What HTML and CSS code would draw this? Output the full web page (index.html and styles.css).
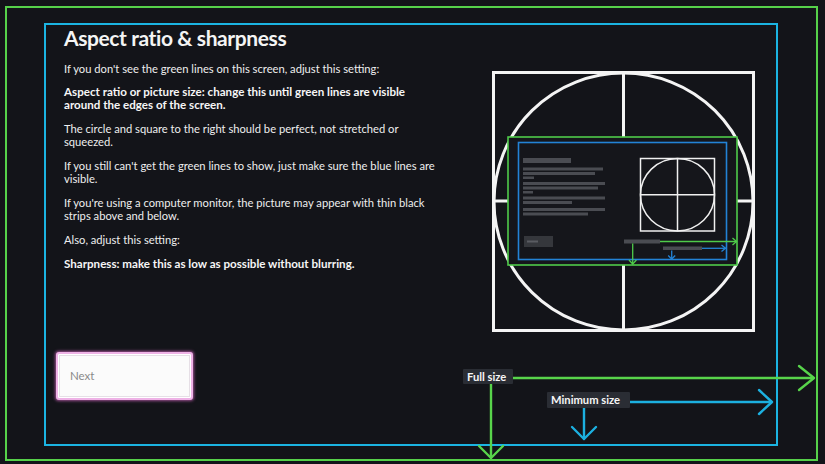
FILE: index.html
```html
<!DOCTYPE html>
<html lang="en">
<head>
<meta charset="utf-8">
<title>Aspect ratio &amp; sharpness</title>
<link rel="stylesheet" href="styles.css">
</head>
<body>
<div class="screen">
  <div class="frame-green">
    <div class="frame-blue">
      <div class="text-col">
        <h1 class="title">Aspect ratio &amp; sharpness</h1>
        <p class="para first">If you don't see the green lines on this screen, adjust this setting:</p>
        <p class="para strong">Aspect ratio or picture size: change this until green lines are visible around the edges of the screen.</p>
        <p class="para">The circle and square to the right should be perfect, not stretched or squeezed.</p>
        <p class="para">If you still can't get the green lines to show, just make sure the blue lines are visible.</p>
        <p class="para">If you're using a computer monitor, the picture may appear with thin black strips above and below.</p>
        <p class="para">Also, adjust this setting:</p>
        <p class="para strong">Sharpness: make this as low as possible without blurring.</p>
        <div class="next-btn">Next</div>
      </div>
      <svg class="pattern" viewBox="490 69 268 266" width="268" height="266">
        <rect x="493.5" y="72.5" width="260" height="258" fill="none" stroke="#f4f4f4" stroke-width="3"/>
        <ellipse cx="623.5" cy="201.5" rx="129.5" ry="128.5" fill="none" stroke="#f4f4f4" stroke-width="3"/>
        <line x1="623.5" y1="72" x2="623.5" y2="331" stroke="#f4f4f4" stroke-width="3"/>
        <line x1="493" y1="201" x2="754" y2="201" stroke="#f4f4f4" stroke-width="3"/>
        <rect x="508" y="137" width="229" height="128" fill="#15161b" stroke="#4fcb4a" stroke-width="1.6"/>
        <rect x="518.5" y="142.5" width="208" height="117" fill="none" stroke="#2383d6" stroke-width="1.6"/>
        <g fill="#4a4c52">
          <rect x="523" y="158" width="48" height="5"/>
          <rect x="523" y="167.5" width="80" height="3"/>
          <rect x="523" y="172" width="72" height="3"/>
          <rect x="523" y="176.5" width="11" height="2.5"/>
          <rect x="523" y="182" width="82" height="3"/>
          <rect x="523" y="186.5" width="75" height="3"/>
          <rect x="523" y="191" width="10" height="2.5"/>
          <rect x="523" y="196.5" width="82" height="3"/>
          <rect x="523" y="201" width="49" height="3"/>
          <rect x="523" y="208" width="82" height="3"/>
          <rect x="523" y="212.5" width="65" height="3"/>
          <rect x="524" y="236" width="29" height="11" fill="#35373c"/>
          <rect x="527" y="240.5" width="11" height="2" fill="#5a5c62"/>
          <rect x="624" y="239.5" width="36" height="4"/>
          <rect x="663" y="246.5" width="39" height="3.5"/>
        </g>
        <g fill="none" stroke="#f0f0f0" stroke-width="1.5">
          <rect x="640.5" y="158.5" width="74" height="72.5"/>
          <ellipse cx="677.5" cy="194.7" rx="37" ry="36.2"/>
          <line x1="677.5" y1="158.5" x2="677.5" y2="231"/>
          <line x1="640.5" y1="194.7" x2="714.5" y2="194.7"/>
        </g>
        <g fill="none" stroke="#4fcb4a" stroke-width="1.3">
          <line x1="660" y1="241.5" x2="736.5" y2="241.5"/>
          <polyline points="732.5,238 736.5,241.5 732.5,245"/>
          <line x1="632.7" y1="243.5" x2="632.7" y2="264"/>
          <polyline points="629,260 632.7,264 636.4,260"/>
        </g>
        <g fill="none" stroke="#2383d6" stroke-width="1.3">
          <line x1="702" y1="248.3" x2="725.5" y2="248.3"/>
          <polyline points="721.5,245 725.5,248.3 721.5,251.6"/>
          <line x1="671.7" y1="250.5" x2="671.7" y2="259"/>
          <polyline points="668.2,255.5 671.7,259 675.2,255.5"/>
        </g>
      </svg>
    </div>
  </div>
  <svg class="guides" viewBox="0 0 825 464" width="825" height="464">
    <g fill="none" stroke="#58d44b" stroke-width="2.4" stroke-linecap="round" stroke-linejoin="round">
      <line x1="513" y1="378" x2="813" y2="378"/>
      <polyline points="799,366 814,378 799,390"/>
      <line x1="491" y1="384" x2="491" y2="458"/>
      <polyline points="479,446 491,458 503,446"/>
    </g>
    <g fill="none" stroke="#1cb0e0" stroke-width="2.4" stroke-linecap="round" stroke-linejoin="round">
      <line x1="630" y1="402" x2="771" y2="402"/>
      <polyline points="759,390 772,402 759,414"/>
      <line x1="584" y1="408" x2="584" y2="439"/>
      <polyline points="572,427 584,439 596,427"/>
    </g>
  </svg>
  <div class="tag tag-full">Full size</div>
  <div class="tag tag-min">Minimum size</div>
</div>
</body>
</html>
```

FILE: styles.css
```css
html, body {
  margin: 0;
  padding: 0;
  background: #121318;
}

.screen {
  position: relative;
  width: 825px;
  height: 464px;
  box-sizing: border-box;
  padding: 6px 0 0 5px;
  background: #131419;
  overflow: hidden;
  font-family: Lato, "Open Sans", sans-serif;
  color: #f2f2f2;
}

.frame-green {
  width: 813px;
  height: 455px;
  box-sizing: border-box;
  border: 2px solid #56d14a;
  padding: 15px 0 0 37px;
}

.frame-blue {
  width: 734px;
  height: 423px;
  box-sizing: border-box;
  border: 2px solid #1bb4e2;
  padding: 0 0 0 18px;
  display: flex;
  align-items: flex-start;
}

.text-col {
  flex: 0 0 375px;
  width: 375px;
  padding-top: 2px;
  margin-right: 51px;
  display: flex;
  flex-direction: column;
  align-items: flex-start;
}

.title {
  margin: 0 0 13px;
  font-size: 21px;
  line-height: 22px;
  font-weight: 700;
  letter-spacing: -0.4px;
  color: #f4f4f4;
  white-space: nowrap;
}

.para {
  margin: 0 0 11px;
  font-size: 11.2px;
  line-height: 13px;
  color: #eeeeee;
}

.para.first {
  margin-bottom: 10px;
}

.para.strong {
  font-size: 11.6px;
  font-weight: 700;
  color: #f6f6f6;
}

.next-btn {
  margin: 71px 0 0 -8px;
  width: 137px;
  height: 48px;
  box-sizing: border-box;
  border: 2px solid #eeb2e6;
  border-radius: 3px;
  box-shadow: 0 0 3px 1px #9b4f90, inset 0 0 0 1px #ffffff, inset 0 0 0 2px #e6dfe6;
  background: #fbfbfb;
  color: #8a8a8a;
  font-size: 11.5px;
  line-height: 44px;
  padding-left: 12px;
}

.pattern {
  display: block;
  flex: 0 0 268px;
  margin: 44px 0 0 0;
}

.guides {
  position: absolute;
  left: 0;
  top: 0;
  pointer-events: none;
}

.tag {
  position: absolute;
  background: #2a2d34;
  color: #f6f6f6;
  font-weight: 700;
  font-size: 11.2px;
  line-height: 15px;
  padding: 0 4px;
  border-radius: 1px;
  white-space: nowrap;
}

.tag-full {
  left: 463px;
  top: 369px;
  width: 42px;
}

.tag-min {
  left: 547px;
  top: 392px;
  height: 16px;
  line-height: 16px;
  width: 75px;
}
```
